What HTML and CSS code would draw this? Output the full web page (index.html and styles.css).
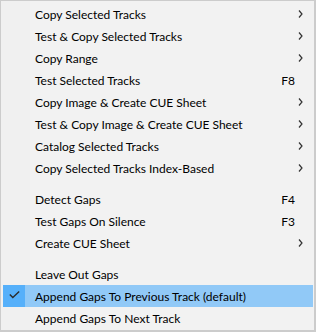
FILE: index.html
```html
<!DOCTYPE html>
<html>
<head>
<meta charset="utf-8">
<link rel="stylesheet" href="styles.css">
</head>
<body>
<div class="menu">
  <div class="item"><span class="check"></span><span class="label">Copy Selected Tracks</span><svg class="arrow" width="5" height="8" viewBox="0 0 5 8"><path d="M1 0.5 L4 4 L1 7.5" /></svg></div>
  <div class="item"><span class="check"></span><span class="label">Test &amp; Copy Selected Tracks</span><svg class="arrow" width="5" height="8" viewBox="0 0 5 8"><path d="M1 0.5 L4 4 L1 7.5" /></svg></div>
  <div class="item"><span class="check"></span><span class="label">Copy Range</span><svg class="arrow" width="5" height="8" viewBox="0 0 5 8"><path d="M1 0.5 L4 4 L1 7.5" /></svg></div>
  <div class="item"><span class="check"></span><span class="label">Test Selected Tracks</span><span class="key">F8</span></div>
  <div class="item"><span class="check"></span><span class="label">Copy Image &amp; Create CUE Sheet</span><svg class="arrow" width="5" height="8" viewBox="0 0 5 8"><path d="M1 0.5 L4 4 L1 7.5" /></svg></div>
  <div class="item"><span class="check"></span><span class="label">Test &amp; Copy Image &amp; Create CUE Sheet</span><svg class="arrow" width="5" height="8" viewBox="0 0 5 8"><path d="M1 0.5 L4 4 L1 7.5" /></svg></div>
  <div class="item"><span class="check"></span><span class="label">Catalog Selected Tracks</span><svg class="arrow" width="5" height="8" viewBox="0 0 5 8"><path d="M1 0.5 L4 4 L1 7.5" /></svg></div>
  <div class="item"><span class="check"></span><span class="label">Copy Selected Tracks Index-Based</span><svg class="arrow" width="5" height="8" viewBox="0 0 5 8"><path d="M1 0.5 L4 4 L1 7.5" /></svg></div>
  <div class="sep"></div>
  <div class="item"><span class="check"></span><span class="label">Detect Gaps</span><span class="key">F4</span></div>
  <div class="item"><span class="check"></span><span class="label">Test Gaps On Silence</span><span class="key">F3</span></div>
  <div class="item"><span class="check"></span><span class="label">Create CUE Sheet</span><svg class="arrow" width="5" height="8" viewBox="0 0 5 8"><path d="M1 0.5 L4 4 L1 7.5" /></svg></div>
  <div class="sep"></div>
  <div class="item"><span class="check"></span><span class="label">Leave Out Gaps</span></div>
  <div class="item selected"><span class="check"><svg width="11" height="8" viewBox="0 0 11 8"><polyline points="0.8,3.6 3.8,6.6 10.2,0.6" /></svg></span><span class="label">Append Gaps To Previous Track (default)</span></div>
  <div class="item"><span class="check"></span><span class="label">Append Gaps To Next Track</span></div>
</div>
</body>
</html>
```

FILE: styles.css
```css
html, body {
  margin: 0;
  padding: 0;
  background: #f2f2f2;
}

.menu {
  box-sizing: border-box;
  width: 316px;
  height: 332px;
  border: 1px solid #cccccc;
  border-right-width: 2px;
  border-bottom-width: 2px;
  padding: 2px 1px 1px 2px;
  background: linear-gradient(to right, #f0f0f0 0, #f0f0f0 29px, #f2f2f2 29px);
  font-family: "Lato", "Noto Sans", sans-serif;
  font-size: 12px;
  color: #000;
}

.item {
  display: flex;
  align-items: center;
  height: 22px;
  white-space: nowrap;
}

.check {
  width: 22px;
  height: 22px;
  display: flex;
  align-items: center;
  justify-content: center;
  flex: none;
}

.check svg {
  margin-top: -2px;
  fill: none;
  stroke: #2b2b2b;
  stroke-width: 1.4;
}

.label {
  margin-left: 10px;
  flex: 1;
}

.key {
  margin-right: 18px;
}

.arrow {
  margin-right: 10px;
  fill: none;
  stroke: #333;
  stroke-width: 1.2;
}

.sep {
  height: 9px;
}

.selected {
  background: #91c9f7;
}

.selected .check {
  background: #56b0fa;
}
```
